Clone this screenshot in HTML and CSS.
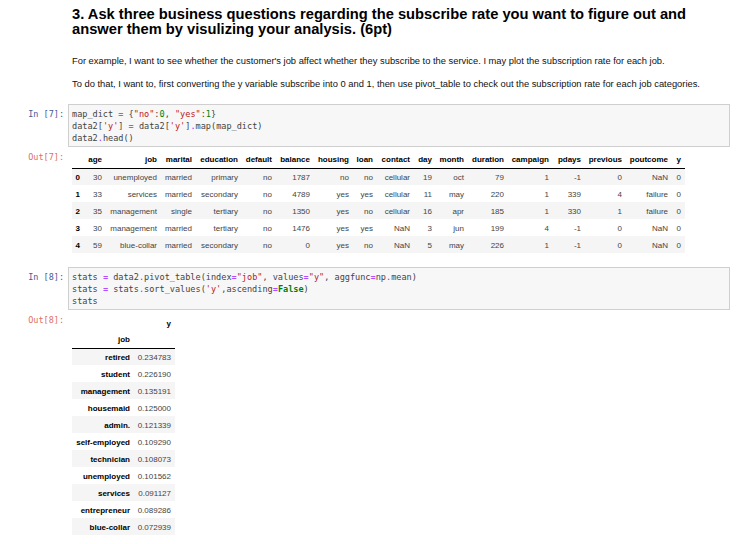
FILE: index.html
```html
<!DOCTYPE html>
<html lang="en">
<head>
    <meta charset="UTF-8">
    <title>Notebook</title>
    <link rel="stylesheet" href="styles.css">
</head>
<body>
    <div class="markdown">
        <h3>3. Ask three business questions regarding the subscribe rate you want to figure out and answer them by visulizing your analysis. (6pt)</h3>
        <p>For example, I want to see whether the customer's job affect whether they subscribe to the service. I may plot the subscription rate for each job.</p>
        <p>To do that, I want to, first converting the y variable subscribe into 0 and 1, then use pivot_table to check out the subscription rate for each job categories.</p>
    </div>

    <div class="cell cell-first">
        <div class="prompt in">In [7]:</div>
        <pre class="code">map_dict <span class="op">=</span> {<span class="str">"no"</span>:<span class="num">0</span>, <span class="str">"yes"</span>:<span class="num">1</span>}
data2[<span class="str">'y'</span>] <span class="op">=</span> data2[<span class="str">'y'</span>]<span class="op">.</span>map(map_dict)
data2<span class="op">.</span>head()</pre>
    </div>
    <div class="cell cell-out">
        <div class="prompt out">Out[7]:</div>
        <table class="frame wide">
            <thead>
                <tr><th></th><th>age</th><th>job</th><th>marital</th><th>education</th><th>default</th><th>balance</th><th>housing</th><th>loan</th><th>contact</th><th>day</th><th>month</th><th>duration</th><th>campaign</th><th>pdays</th><th>previous</th><th>poutcome</th><th>y</th></tr>
            </thead>
            <tbody>
                <tr><th>0</th><td>30</td><td>unemployed</td><td>married</td><td>primary</td><td>no</td><td>1787</td><td>no</td><td>no</td><td>cellular</td><td>19</td><td>oct</td><td>79</td><td>1</td><td>-1</td><td>0</td><td>NaN</td><td>0</td></tr>
                <tr><th>1</th><td>33</td><td>services</td><td>married</td><td>secondary</td><td>no</td><td>4789</td><td>yes</td><td>yes</td><td>cellular</td><td>11</td><td>may</td><td>220</td><td>1</td><td>339</td><td>4</td><td>failure</td><td>0</td></tr>
                <tr><th>2</th><td>35</td><td>management</td><td>single</td><td>tertiary</td><td>no</td><td>1350</td><td>yes</td><td>no</td><td>cellular</td><td>16</td><td>apr</td><td>185</td><td>1</td><td>330</td><td>1</td><td>failure</td><td>0</td></tr>
                <tr><th>3</th><td>30</td><td>management</td><td>married</td><td>tertiary</td><td>no</td><td>1476</td><td>yes</td><td>yes</td><td>NaN</td><td>3</td><td>jun</td><td>199</td><td>4</td><td>-1</td><td>0</td><td>NaN</td><td>0</td></tr>
                <tr><th>4</th><td>59</td><td>blue-collar</td><td>married</td><td>secondary</td><td>no</td><td>0</td><td>yes</td><td>no</td><td>NaN</td><td>5</td><td>may</td><td>226</td><td>1</td><td>-1</td><td>0</td><td>NaN</td><td>0</td></tr>
            </tbody>
        </table>
    </div>

    <div class="cell cell-second">
        <div class="prompt in">In [8]:</div>
        <pre class="code">stats <span class="op">=</span> data2<span class="op">.</span>pivot_table(index<span class="op">=</span><span class="str">"job"</span>, values<span class="op">=</span><span class="str">"y"</span>, aggfunc<span class="op">=</span>np<span class="op">.</span>mean)
stats <span class="op">=</span> stats<span class="op">.</span>sort_values(<span class="str">'y'</span>,ascending<span class="op">=</span><span class="kw">False</span>)
stats</pre>
    </div>
    <div class="cell cell-out">
        <div class="prompt out">Out[8]:</div>
        <table class="frame narrow">
            <thead>
                <tr class="head-top"><th></th><th>y</th></tr>
                <tr><th>job</th><th></th></tr>
            </thead>
            <tbody>
                <tr><th>retired</th><td>0.234783</td></tr>
                <tr><th>student</th><td>0.226190</td></tr>
                <tr><th>management</th><td>0.135191</td></tr>
                <tr><th>housemaid</th><td>0.125000</td></tr>
                <tr><th>admin.</th><td>0.121339</td></tr>
                <tr><th>self-employed</th><td>0.109290</td></tr>
                <tr><th>technician</th><td>0.108073</td></tr>
                <tr><th>unemployed</th><td>0.101562</td></tr>
                <tr><th>services</th><td>0.091127</td></tr>
                <tr><th>entrepreneur</th><td>0.089286</td></tr>
                <tr><th>blue-collar</th><td>0.072939</td></tr>
            </tbody>
        </table>
    </div>
</body>
</html>
```

FILE: styles.css
```css
body {
    margin: 0;
    background-color: #fff;
    color: #000;
    font-family: "Liberation Sans", Arial, sans-serif;
}

.markdown {
    padding: 7px 40px 0 72px;
}

h3 {
    margin: 0 0 19px;
    font-size: 14.7px;
    line-height: 15px;
    font-weight: bold;
}

p {
    margin: 0 0 13px;
    font-size: 9.35px;
    line-height: 10px;
    color: #111;
}

.cell {
    display: flex;
    align-items: flex-start;
}

.cell-first {
    margin-top: 15px;
}

.cell-second {
    margin-top: 14px;
}

.cell-out {
    margin-top: 4px;
}

.prompt {
    width: 64px;
    flex: none;
    text-align: right;
    font-family: "DejaVu Sans Mono", monospace;
    font-size: 8.5px;
    line-height: 12px;
}

.in {
    padding-top: 4px;
    color: #4a5a9a;
}

.out {
    color: #e0705f;
}

.code {
    width: 654px;
    margin: 0 0 0 4px;
    padding: 3px 3px 2px 3px;
    border: 1px solid #cfcfcf;
    background-color: #f7f7f7;
    font-family: "DejaVu Sans Mono", monospace;
    font-size: 8.55px;
    line-height: 12px;
    color: #444;
}

.op { color: #aa22ff; }
.str { color: #ba2121; }
.num { color: #008000; }
.kw { color: #008000; font-weight: bold; }

.frame {
    margin-left: 8px;
    border-collapse: collapse;
    table-layout: fixed;
    font-size: 8px;
    line-height: 10px;
    color: #444;
}

.frame th, .frame td {
    box-sizing: border-box;
    padding: 2px 4px 0 0;
    height: 17px;
    text-align: right;
    white-space: nowrap;
}

.frame th {
    font-weight: bold;
    color: #000;
}

.frame thead tr:last-child th {
    border-bottom: 1px solid #000;
}

.frame tbody tr:nth-child(odd) {
    background-color: #f5f5f5;
}

.wide { width: 613px; }
.wide th:nth-child(1) { width: 12px; }
.wide th:nth-child(2) { width: 22px; }
.wide th:nth-child(3) { width: 55px; }
.wide th:nth-child(4) { width: 35px; }
.wide th:nth-child(5) { width: 46px; }
.wide th:nth-child(6) { width: 34px; }
.wide th:nth-child(7) { width: 38px; }
.wide th:nth-child(8) { width: 39px; }
.wide th:nth-child(9) { width: 24px; }
.wide th:nth-child(10) { width: 37px; }
.wide th:nth-child(11) { width: 22px; }
.wide th:nth-child(12) { width: 32px; }
.wide th:nth-child(13) { width: 40px; }
.wide th:nth-child(14) { width: 45px; }
.wide th:nth-child(15) { width: 32px; }
.wide th:nth-child(16) { width: 41px; }
.wide th:nth-child(17) { width: 46px; }
.wide th:nth-child(18) { width: 13px; }

.narrow { width: 103px; }
.narrow th:nth-child(1) { width: 62px; }
.narrow th:nth-child(2) { width: 41px; }
```
